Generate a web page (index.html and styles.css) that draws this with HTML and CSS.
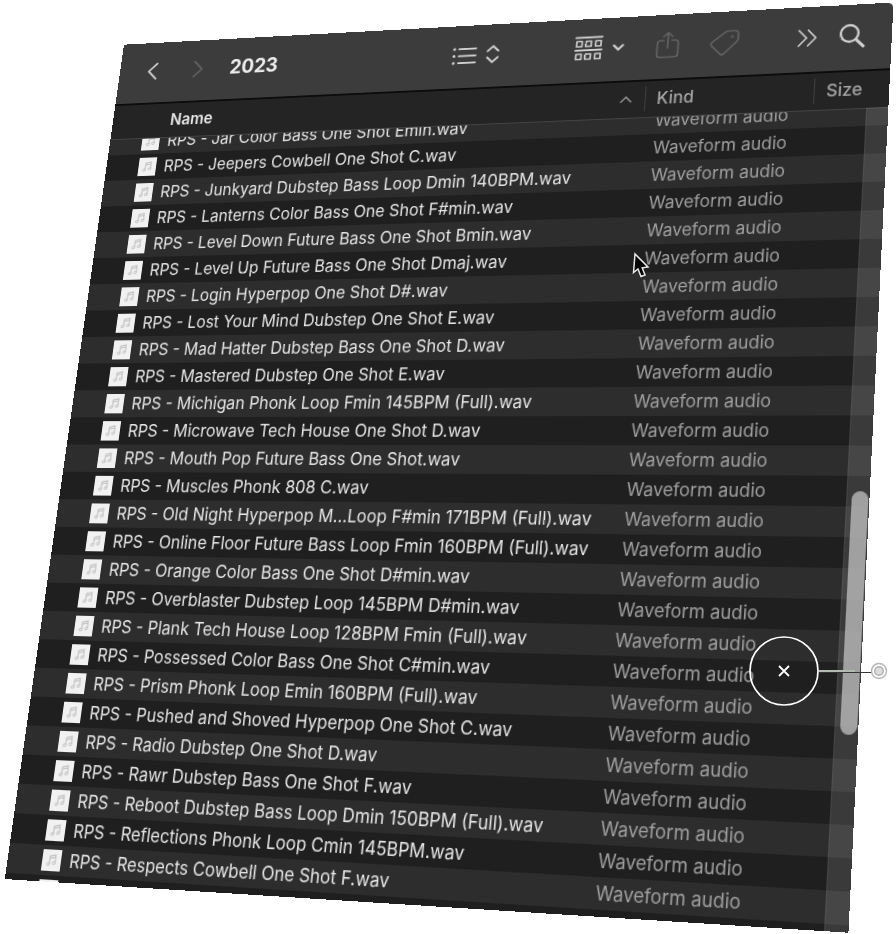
FILE: index.html
```html
<!DOCTYPE html>
<html lang="en">
<head>
<meta charset="utf-8">
<title>2023</title>
<link rel="stylesheet" href="styles.css">
</head>
<body>
<svg width="0" height="0" class="defs" aria-hidden="true">
  <symbol id="note" viewBox="0 0 20 20">
    <rect width="20" height="20" fill="#f1f1f1"/>
    <path d="M8 13.5V6.2l6-1.2v7.3M8 8.2l6-1.2" fill="none" stroke="#bdbdbd" stroke-width="1.1"/>
    <ellipse cx="6.7" cy="13.6" rx="1.6" ry="1.2" fill="none" stroke="#bdbdbd"/>
    <ellipse cx="12.7" cy="12.4" rx="1.6" ry="1.2" fill="none" stroke="#bdbdbd"/>
  </symbol>
</svg>
<main class="window">
  <header class="toolbar">
    <nav class="history">
      <button aria-label="Back"><svg width="16" height="20" viewBox="0 0 16 20"><path d="M12.5 1.5 3.5 10l9 8.5" stroke-width="2"/></svg></button>
      <button class="off" aria-label="Forward"><svg width="16" height="20" viewBox="0 0 16 20"><path d="m3.500 1.500 9 8.500-9 8.500" stroke-width="1.800"/></svg></button>
    </nav>
    <h1>2023</h1>
    <div class="tools">
      <button class="pair view" aria-label="View as list">
        <svg width="26" height="20" viewBox="0 0 26 20"><path d="M7 3h18M7 10.500h18M7 18h18" stroke-width="1.800"/><path d="M2 3h.1M2 10.500h.1M2 18h.1" stroke-width="3"/></svg>
        <svg width="14" height="22" viewBox="0 0 14 22"><path d="m1.500 7.500 5.500-5 5.500 5M1.500 14.500l5.500 5 5.500-5" stroke-width="2.200"/></svg>
      </button>
      <button class="pair group" aria-label="Group items">
        <svg width="29" height="27" viewBox="0 0 29 27"><path d="M1 1.500h27M1 15h27" stroke-width="1.800"/><path d="M2 5.500h5.500v5.500H2zM11.500 5.500H17v5.500h-5.500zM21.500 5.500H27v5.500h-5.500zM2 19h5.500v5.500H2zM11.500 19H17v5.500h-5.500zM21.500 19H27v5.500h-5.500z" stroke-width="1.700"/></svg>
        <svg width="12" height="10" viewBox="0 0 12 10"><path d="m1.500 2.500 4.500 4.500 4.500-4.500" stroke-width="2.400"/></svg>
      </button>
      <button class="off share" aria-label="Share"><svg width="24" height="30" viewBox="0 0 24 30"><path d="M8 10H4.500A3 3 0 0 0 1.500 13v11.500a3 3 0 0 0 3 3h15a3 3 0 0 0 3-3V13a3 3 0 0 0-3-3H16M12 18V2M7.500 6 12 1.800 16.500 6" stroke-width="1.700"/></svg></button>
      <button class="off tag" aria-label="Edit tags"><svg width="30" height="30" viewBox="0 0 30 30"><path d="M17.500 3.500h7.500q3 0 3 3V12q0 1.500-1.100 2.600L14.500 27q-2 1.500-3.700 0L2 18.300q-1.500-1.800 0-3.600L14.900 4.600q1.100-1.100 2.600-1.100z" stroke-width="1.700"/><circle cx="22" cy="9.500" r="1.200"/></svg></button>
      <button class="more" aria-label="More"><svg width="20" height="18" viewBox="0 0 20 18"><path d="m1.500 1 7.500 8-7.500 8M10.500 1l7.500 8-7.500 8" stroke-width="1.700"/></svg></button>
      <button aria-label="Search"><svg width="26" height="26" viewBox="0 0 26 26"><circle cx="10.500" cy="10.500" r="8.500" stroke-width="2.300"/><path d="m17 17 7 7" stroke-width="3"/></svg></button>
    </div>
  </header>
  <div class="list">
    <table>
      <colgroup><col class="c-name"><col class="c-kind"><col></colgroup>
      <thead>
        <tr><th class="name"><div class="sort">Name <svg width="14" height="8" viewBox="0 0 14 8"><path d="m1.500 7 5.500-5.500L12.500 7" stroke-width="1.500"/></svg></div></th><th><div class="rule">Kind</div></th><th><div class="rule">Size</div></th></tr>
      </thead>
      <tbody>
        <tr class="first"><td><div class="cell"><svg class="file"><use href="#note"/></svg>RPS - Jar Color Bass One Shot Emin.wav</div></td><td><div class="cell">Waveform audio</div></td><td></td></tr>
        <tr><td><div class="cell"><svg class="file"><use href="#note"/></svg>RPS - Jeepers Cowbell One Shot C.wav</div></td><td><div class="cell">Waveform audio</div></td><td></td></tr>
        <tr><td><div class="cell"><svg class="file"><use href="#note"/></svg>RPS - Junkyard Dubstep Bass Loop Dmin 140BPM.wav</div></td><td><div class="cell">Waveform audio</div></td><td></td></tr>
        <tr><td><div class="cell"><svg class="file"><use href="#note"/></svg>RPS - Lanterns Color Bass One Shot F#min.wav</div></td><td><div class="cell">Waveform audio</div></td><td></td></tr>
        <tr><td><div class="cell"><svg class="file"><use href="#note"/></svg>RPS - Level Down Future Bass One Shot Bmin.wav</div></td><td><div class="cell">Waveform audio</div></td><td></td></tr>
        <tr><td><div class="cell"><svg class="file"><use href="#note"/></svg>RPS - Level Up Future Bass One Shot Dmaj.wav</div></td><td><div class="cell">Waveform audio</div></td><td></td></tr>
        <tr><td><div class="cell"><svg class="file"><use href="#note"/></svg>RPS - Login Hyperpop One Shot D#.wav</div></td><td><div class="cell">Waveform audio</div></td><td></td></tr>
        <tr><td><div class="cell"><svg class="file"><use href="#note"/></svg>RPS - Lost Your Mind Dubstep One Shot E.wav</div></td><td><div class="cell">Waveform audio</div></td><td></td></tr>
        <tr><td><div class="cell"><svg class="file"><use href="#note"/></svg>RPS - Mad Hatter Dubstep Bass One Shot D.wav</div></td><td><div class="cell">Waveform audio</div></td><td></td></tr>
        <tr><td><div class="cell"><svg class="file"><use href="#note"/></svg>RPS - Mastered Dubstep One Shot E.wav</div></td><td><div class="cell">Waveform audio</div></td><td></td></tr>
        <tr><td><div class="cell"><svg class="file"><use href="#note"/></svg>RPS - Michigan Phonk Loop Fmin 145BPM (Full).wav</div></td><td><div class="cell">Waveform audio</div></td><td></td></tr>
        <tr><td><div class="cell"><svg class="file"><use href="#note"/></svg>RPS - Microwave Tech House One Shot D.wav</div></td><td><div class="cell">Waveform audio</div></td><td></td></tr>
        <tr><td><div class="cell"><svg class="file"><use href="#note"/></svg>RPS - Mouth Pop Future Bass One Shot.wav</div></td><td><div class="cell">Waveform audio</div></td><td></td></tr>
        <tr><td><div class="cell"><svg class="file"><use href="#note"/></svg>RPS - Muscles Phonk 808 C.wav</div></td><td><div class="cell">Waveform audio</div></td><td></td></tr>
        <tr><td><div class="cell"><svg class="file"><use href="#note"/></svg>RPS - Old Night Hyperpop M…Loop F#min 171BPM (Full).wav</div></td><td><div class="cell">Waveform audio</div></td><td></td></tr>
        <tr><td><div class="cell"><svg class="file"><use href="#note"/></svg>RPS - Online Floor Future Bass Loop Fmin 160BPM (Full).wav</div></td><td><div class="cell">Waveform audio</div></td><td></td></tr>
        <tr><td><div class="cell"><svg class="file"><use href="#note"/></svg>RPS - Orange Color Bass One Shot D#min.wav</div></td><td><div class="cell">Waveform audio</div></td><td></td></tr>
        <tr><td><div class="cell"><svg class="file"><use href="#note"/></svg>RPS - Overblaster Dubstep Loop 145BPM D#min.wav</div></td><td><div class="cell">Waveform audio</div></td><td></td></tr>
        <tr><td><div class="cell"><svg class="file"><use href="#note"/></svg>RPS - Plank Tech House Loop 128BPM Fmin (Full).wav</div></td><td><div class="cell">Waveform audio</div></td><td></td></tr>
        <tr><td><div class="cell"><svg class="file"><use href="#note"/></svg>RPS - Possessed Color Bass One Shot C#min.wav</div></td><td><div class="cell">Waveform audio</div></td><td></td></tr>
        <tr><td><div class="cell"><svg class="file"><use href="#note"/></svg>RPS - Prism Phonk Loop Emin 160BPM (Full).wav</div></td><td><div class="cell">Waveform audio</div></td><td></td></tr>
        <tr><td><div class="cell"><svg class="file"><use href="#note"/></svg>RPS - Pushed and Shoved Hyperpop One Shot C.wav</div></td><td><div class="cell">Waveform audio</div></td><td></td></tr>
        <tr><td><div class="cell"><svg class="file"><use href="#note"/></svg>RPS - Radio Dubstep One Shot D.wav</div></td><td><div class="cell">Waveform audio</div></td><td></td></tr>
        <tr><td><div class="cell"><svg class="file"><use href="#note"/></svg>RPS - Rawr Dubstep Bass One Shot F.wav</div></td><td><div class="cell">Waveform audio</div></td><td></td></tr>
        <tr><td><div class="cell"><svg class="file"><use href="#note"/></svg>RPS - Reboot Dubstep Bass Loop Dmin 150BPM (Full).wav</div></td><td><div class="cell">Waveform audio</div></td><td></td></tr>
        <tr><td><div class="cell"><svg class="file"><use href="#note"/></svg>RPS - Reflections Phonk Loop Cmin 145BPM.wav</div></td><td><div class="cell">Waveform audio</div></td><td></td></tr>
        <tr><td><div class="cell"><svg class="file"><use href="#note"/></svg>RPS - Respects Cowbell One Shot F.wav</div></td><td><div class="cell">Waveform audio</div></td><td></td></tr>
        <tr class="last"><td><div class="cell"><svg class="file"><use href="#note"/></svg></div></td><td></td><td></td></tr>
      </tbody>
    </table>
    <div class="track"><div class="thumb"></div></div>
  </div>
</main>
<svg class="pointer" width="20" height="30" viewBox="0 0 20 30" aria-hidden="true"><path d="M3 2 1.500 20.500l4.500-3.500 3 7.500 4-1.500-2.800-7.200 5.800-.8z" fill="#000" stroke="#e8e8e8" stroke-width="1.500"/></svg>
<svg class="marker" width="142" height="72" viewBox="0 0 142 72" aria-hidden="true">
  <path d="M71 36h36" stroke="#b4b9b4" stroke-width="2"/>
  <path d="M71 37.500h54" stroke="#333" stroke-width="1"/>
  <circle cx="36" cy="36" r="34" fill="none" stroke="#fff" stroke-width="1.700"/>
  <path d="m31 31 10 10M41 31 31 41" stroke="#fff" stroke-width="1.800"/>
  <circle cx="131" cy="36" r="7.500" fill="#fff" stroke="#b5b5b5" stroke-width="1.500"/>
  <circle cx="131" cy="36" r="4.300" fill="#dcdcdc" stroke="#b0b0b0" stroke-width="1.500"/>
</svg>
</body>
</html>
```
FILE: styles.css
```css
* { box-sizing: border-box; }

body {
  margin: 0;
  min-height: 100vh;
  background: #fff;
  font-family: Inter, "Liberation Sans", sans-serif;
  font-size: 17px;
}

.defs { position: absolute; }

/* The window is laid out flat and tilted as one plane. */
.window {
  width: calc(100vw - 84px);
  transform-origin: 0 0;
  transform: matrix3d(
    0.840197, -0.052271, 0, -0.00012027,
    -0.139399, 0.877130, 0, -0.00010845,
    0, 0, 1, 0,
    124, 44.7, 0, 1);
  background: #1f1f1f;
  border-radius: 0 6px 0 0;
  overflow: hidden;
}

.toolbar {
  display: flex;
  align-items: center;
  height: 69px;
  padding: 0 25px 4px 30px;
  background: #3c3c3c;
  border-bottom: 2px solid #0c0c0c;
}

.toolbar button {
  display: flex;
  align-items: center;
  padding: 0;
  border: 0;
  background: none;
  color: #cfcfcf;
}

.toolbar button.off { color: #626262; }

.window svg { fill: none; stroke: currentColor; }
.window .file { stroke: none; }
.toolbar path { stroke-linecap: round; stroke-linejoin: round; }

.history { display: flex; gap: 36px; }

h1 {
  margin: 0 0 0 28px;
  font-size: 21px;
  line-height: 28px;
  font-weight: 700;
  color: #ececec;
}

.tools {
  display: flex;
  align-items: center;
  margin-left: auto;
}

.pair { gap: 10px; }
.view { margin-right: 78px; }
.group { margin-right: 32px; }
.share { margin-right: 30px; }
.tag { margin-right: 56px; }
.more { margin-right: 20px; }

.list { position: relative; }

table {
  width: 100%;
  table-layout: fixed;
  border-collapse: collapse;
}

.c-name { width: 574px; }
.c-kind { width: 166px; }

th, td {
  padding: 0;
  text-align: left;
  white-space: nowrap;
}

th {
  height: 37px;
  background: #242424;
  border-bottom: 1px solid #444;
  color: #a6a6a6;
  font-size: 17px;
  font-weight: 500;
}

th.name { color: #e6e6e6; font-weight: 600; }

.sort {
  display: flex;
  align-items: center;
  justify-content: space-between;
  padding: 0 12px 0 66px;
}

.sort svg { color: #9a9a9a; }

.rule {
  padding-left: 11px;
  border-left: 1px solid #3e3e3e;
  line-height: 26px;
}

tbody tr { background: #1f1f1f; }
tbody tr:nth-child(odd) { background: #2d2d2d; }
td { color: #a0a0a0; }
td:first-child { color: #e6e6e6; }

.cell {
  display: flex;
  align-items: center;
  gap: 9px;
  height: 28px;
  padding-left: 12px;
  line-height: 28px;
}

td:first-child .cell { padding-left: 37px; }

.first .cell {
  height: 17px;
  align-items: flex-end;
  overflow: hidden;
}

.first .file { margin-bottom: 4px; }

.last .cell {
  height: 6px;
  align-items: flex-start;
  padding-top: 4px;
  overflow: hidden;
}

.file {
  width: 20px;
  height: 20px;
  flex: none;
}

.track {
  position: absolute;
  top: 37px;
  right: 0;
  bottom: 0;
  width: 21px;
  padding: 368px 1px 0 4px;
  background: rgba(255, 255, 255, 0.12);
  border-left: 1px solid rgba(255, 255, 255, 0.05);
}

.thumb {
  height: 217px;
  border-radius: 8px;
  background: rgba(172, 172, 172, 0.9);
}

.pointer {
  position: absolute;
  left: 632px;
  top: 252px;
}

.marker {
  position: absolute;
  left: 748px;
  top: 635px;
}
```
